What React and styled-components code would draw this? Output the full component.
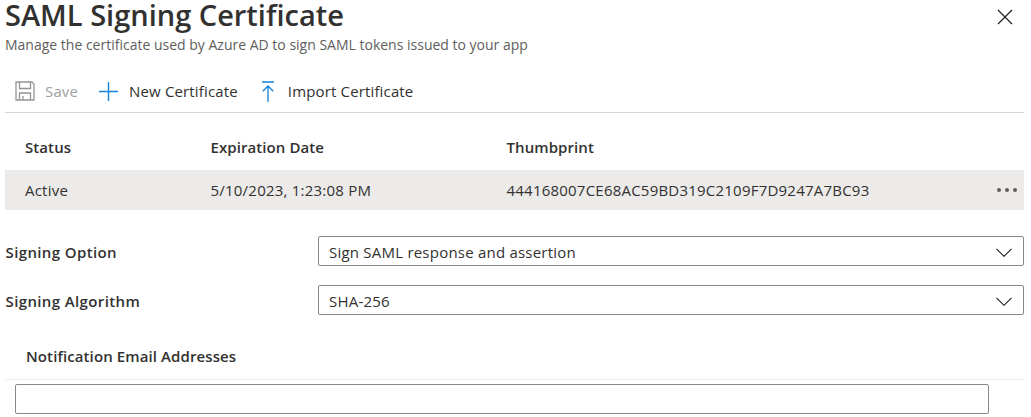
import styled, { createGlobalStyle } from "styled-components";

const GlobalStyle = createGlobalStyle`
  html, body {
    margin: 0;
    padding: 0;
    background: #fff;
    overflow: hidden;
  }
  body {
    font-family: "Open Sans", "Noto Sans", sans-serif;
    color: #323130;
  }
`;

const Page = styled.div`
  width: 1031px;
  height: 417px;
  padding: 0 7px 0 5px;
  box-sizing: border-box;
`;

const Header = styled.div`
  display: flex;
  justify-content: space-between;
  height: 70px;
`;

const Title = styled.h1`
  margin: 0;
  font-size: 29px;
  line-height: 30px;
  font-weight: 600;
`;

const Subtitle = styled.div`
  font-size: 14px;
  line-height: 18px;
  margin-top: 6px;
  color: #605e5c;
`;

const CloseButton = styled.button`
  border: 0;
  background: none;
  padding: 0;
  margin: 9px 11px 0 0;
  width: 16px;
  height: 16px;
  display: flex;
`;

const Toolbar = styled.div`
  display: flex;
  align-items: center;
  height: 42px;
  border-bottom: 1px solid #d6d6d6;
  padding-left: 10px;
`;

const ToolButton = styled.div`
  display: flex;
  align-items: center;
  gap: ${(p) => p.$gap}px;
  margin-right: ${(p) => p.$after}px;
  font-size: 15px;
  letter-spacing: 0.15px;
  color: ${(p) => (p.$disabled ? "#a19f9d" : "#323130")};
`;

const Columns = styled.div`
  display: grid;
  grid-template-columns: 185.5px 296px 1fr 27px;
  align-items: center;
  padding-left: 20px;
  font-size: 15px;
`;

const TableHead = styled(Columns)`
  height: 57px;
  padding-top: 10px;
  box-sizing: border-box;
  font-weight: 600;
  letter-spacing: 0.08px;
`;

const TableRow = styled(Columns)`
  height: 40px;
  background: #edebe9;
  letter-spacing: 0.22px;
`;

const Dots = styled.div`
  display: flex;
  gap: 4px;
`;

const Dot = styled.span`
  width: 4px;
  height: 4px;
  border-radius: 50%;
  background: #605e5c;
`;

const Form = styled.div`
  display: flex;
  flex-direction: column;
  gap: 19px;
  margin-top: 26px;
`;

const Field = styled.div`
  display: grid;
  grid-template-columns: 313px 1fr;
  align-items: center;
`;

const FieldLabel = styled.div`
  padding: 2px 0 0 0.5px;
  font-size: 15px;
  font-weight: 600;
  letter-spacing: 0.38px;
`;

const Select = styled.div`
  height: 30px;
  box-sizing: border-box;
  border: 1px solid #8a8886;
  border-radius: 2px;
  display: flex;
  align-items: center;
  justify-content: space-between;
  padding: 2px 11px 0 10px;
  font-size: 15px;
  letter-spacing: 0.22px;
`;

const EmailHead = styled.div`
  margin-top: 27px;
  height: 37px;
  padding: 0 0 0 21px;
  border-bottom: 1px solid #edebe9;
  font-size: 15px;
  line-height: 28px;
  font-weight: 600;
  letter-spacing: 0.1px;
`;

const EmailInput = styled.input`
  display: block;
  width: 974px;
  height: 30px;
  margin: 4px 0 0 10px;
  box-sizing: border-box;
  border: 1px solid #8a8886;
  border-radius: 2px;
  background: #fff;
  padding: 0 10px;
`;

function SaveIcon() {
  return (
    <svg width="20" height="20" viewBox="0 0 20 20" fill="none" stroke="#979593" strokeWidth="1.3">
      <path d="M1 1h16l2 2v16H1z" />
      <path d="M4.5 1v6.5h11V1" />
      <path d="M4.5 19v-7h11v7M8 15v4" />
    </svg>
  );
}

function PlusIcon() {
  return (
    <svg width="19" height="19" viewBox="0 0 19 19" stroke="#1683d8" strokeWidth="1.4">
      <path d="M0 9.5h19M9.5 0v19" />
    </svg>
  );
}

function ImportIcon() {
  return (
    <svg width="14" height="21" viewBox="0 0 14 21" fill="none" stroke="#1683d8" strokeWidth="1.3">
      <path d="M1 1h12M7 21V5M1.8 10.2L7 5l5.2 5.2" />
    </svg>
  );
}

function Chevron() {
  return (
    <svg width="16" height="9" viewBox="0 0 16 9" fill="none" stroke="#201f1e" strokeWidth="1.1">
      <path d="M.5.8l7.5 7.5L15.5.8" />
    </svg>
  );
}

export default function App() {
  return (
    <Page>
      <GlobalStyle />
      <Header>
        <div>
          <Title>SAML Signing Certificate</Title>
          <Subtitle>Manage the certificate used by Azure AD to sign SAML tokens issued to your app</Subtitle>
        </div>
        <CloseButton aria-label="Close">
          <svg width="16" height="16" viewBox="0 0 16 16" stroke="#201f1e" strokeWidth="1.2">
            <path d="M1 1l14 14M15 1L1 15" />
          </svg>
        </CloseButton>
      </Header>
      <Toolbar>
        <ToolButton $disabled $gap={10} $after={21}>
          <SaveIcon />
          Save
        </ToolButton>
        <ToolButton $gap={11} $after={23}>
          <PlusIcon />
          New Certificate
        </ToolButton>
        <ToolButton $gap={13} $after={0}>
          <ImportIcon />
          Import Certificate
        </ToolButton>
      </Toolbar>
      <TableHead>
        <div>Status</div>
        <div>Expiration Date</div>
        <div>Thumbprint</div>
      </TableHead>
      <TableRow>
        <div>Active</div>
        <div>5/10/2023, 1:23:08 PM</div>
        <div>444168007CE68AC59BD319C2109F7D9247A7BC93</div>
        <Dots>
          <Dot />
          <Dot />
          <Dot />
        </Dots>
      </TableRow>
      <Form>
        <Field>
          <FieldLabel>Signing Option</FieldLabel>
          <Select>
            Sign SAML response and assertion
            <Chevron />
          </Select>
        </Field>
        <Field>
          <FieldLabel>Signing Algorithm</FieldLabel>
          <Select>
            SHA-256
            <Chevron />
          </Select>
        </Field>
      </Form>
      <EmailHead>Notification Email Addresses</EmailHead>
      <EmailInput />
    </Page>
  );
}
